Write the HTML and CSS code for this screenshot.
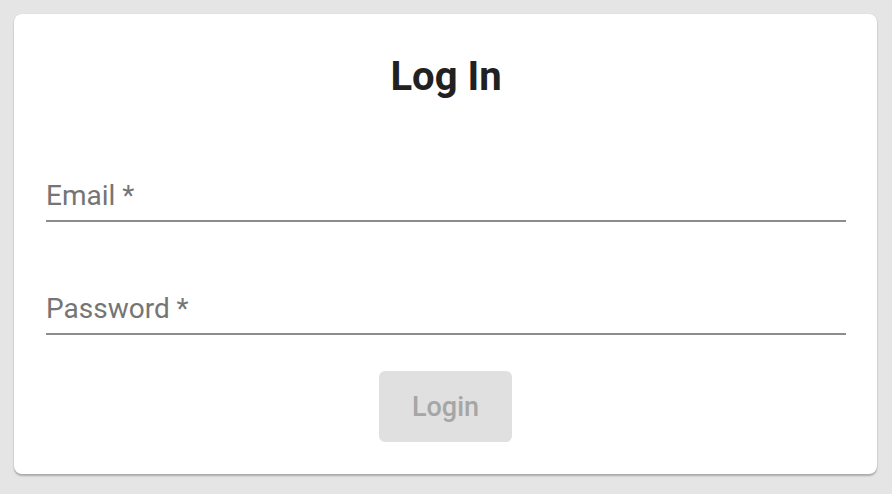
FILE: index.html
```html
<!DOCTYPE html>
<html lang="en">
<head>
    <meta charset="UTF-8">
    <meta name="viewport" content="width=device-width, initial-scale=1.0">
    <title>Log In</title>
    <link rel="stylesheet" href="styles.css">
</head>
<body>
    <div class="card">
        <h1 class="title">Log In</h1>
        <form class="login-form" onsubmit="return false">
            <label class="field">
                <input type="email" placeholder="Email *" required>
            </label>
            <label class="field">
                <input type="password" placeholder="Password *" required>
            </label>
            <div class="actions">
                <button class="btn" type="submit" disabled>Login</button>
            </div>
        </form>
    </div>
</body>
</html>
```

FILE: styles.css
```css
* {
    margin: 0;
    padding: 0;
    box-sizing: border-box;
}
body {
    background-color: #e5e5e5;
    font-family: Roboto, "Liberation Sans", sans-serif;
    padding: 14px 15px 20px 14px;
}
.card {
    background-color: #fff;
    border-radius: 8px;
    box-shadow: 0 2px 2px rgba(0, 0, 0, 0.25), 0 0 1px rgba(0, 0, 0, 0.12);
    height: 460px;
    padding: 0 31px 0 32px;
}
.title {
    text-align: center;
    font-size: 40px;
    font-weight: 700;
    color: #212121;
    padding-top: 39px;
    line-height: 48px;
}
.login-form {
    display: flex;
    flex-direction: column;
}
.field {
    display: block;
    border-bottom: 2px solid #8c8c8c;
}
.field:first-child {
    margin-top: 53px;
}
.field + .field {
    margin-top: 45px;
}
.field input {
    display: block;
    width: 100%;
    border: none;
    outline: none;
    background: transparent;
    font-family: inherit;
    font-size: 28px;
    color: #212121;
    height: 66px;
    padding-top: 16px;
}
.field input::placeholder {
    color: #757575;
}
/* 按钮居中 */
.actions {
    display: flex;
    justify-content: center;
    margin-top: 36px;
    padding-right: 1px;
}
.btn {
    width: 133px;
    height: 71px;
    border: none;
    border-radius: 6px;
    background-color: #e0e0e0;
    color: #a6a6a6;
    font-family: inherit;
    font-size: 27px;
    font-weight: 500;
}
```
